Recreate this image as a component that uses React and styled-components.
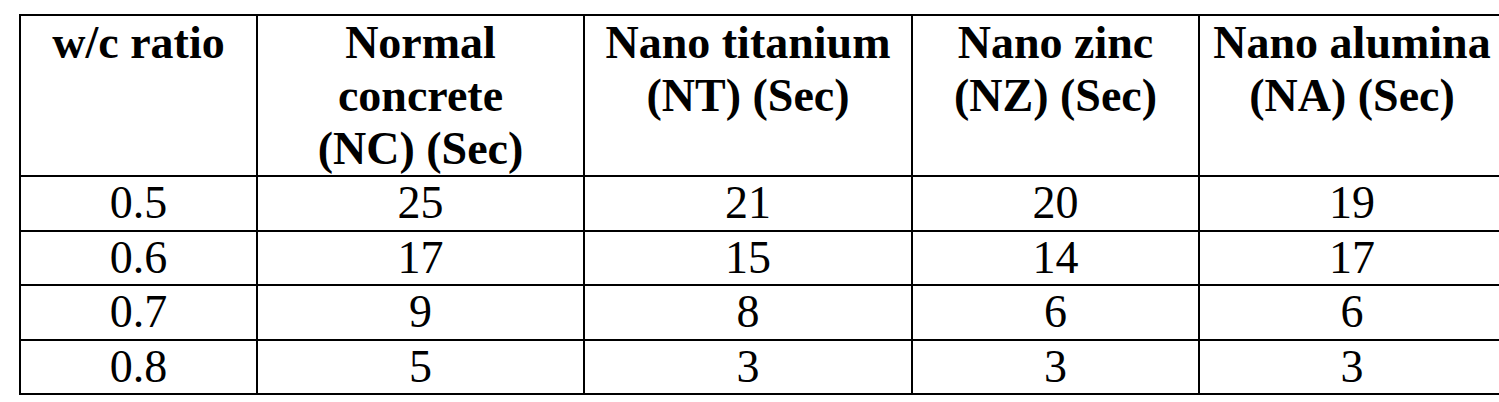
import React from "react";
import styled, { createGlobalStyle } from "styled-components";

const GlobalStyle = createGlobalStyle`
  html, body {
    margin: 0;
    padding: 0;
    background: #ffffff;
    overflow: hidden;
  }
`;

const Page = styled.div`
  padding: 14px 0 0 19px;
  width: 1600px;
`;

const Table = styled.table`
  border-collapse: collapse;
  table-layout: fixed;
  width: 1485px;
  font-family: "Liberation Serif", "Times New Roman", serif;
  font-size: 46px;
  line-height: 53px;
  color: #000;
`;

const HeadCell = styled.th`
  border: 2px solid #000;
  padding: 0 2px;
  font-weight: 700;
  text-align: center;
  vertical-align: top;
  height: 159px;
  box-sizing: border-box;
`;

const Cell = styled.td`
  border: 2px solid #000;
  padding: 0;
  text-align: center;
  vertical-align: top;
  font-weight: 400;
  line-height: 52.5px;
`;

const columns = [
  { width: 237, label: ["w/c ratio"] },
  { width: 327, label: ["Normal", "concrete", "(NC) (Sec)"] },
  { width: 328, label: ["Nano titanium", "(NT) (Sec)"] },
  { width: 287, label: ["Nano zinc", "(NZ) (Sec)"] },
  { width: 306, label: ["Nano alumina", "(NA) (Sec)"] },
];

const rows = [
  ["0.5", "25", "21", "20", "19"],
  ["0.6", "17", "15", "14", "17"],
  ["0.7", "9", "8", "6", "6"],
  ["0.8", "5", "3", "3", "3"],
];

const App = () => {
  return (
    <Page>
      <GlobalStyle />
      <Table>
        <colgroup>
          {columns.map((c, i) => (
            <col key={i} style={{ width: c.width }} />
          ))}
        </colgroup>
        <thead>
          <tr>
            {columns.map((c, i) => (
              <HeadCell key={i}>
                {c.label.map((line, j) => (
                  <React.Fragment key={j}>
                    {j > 0 && <br />}
                    {line}
                  </React.Fragment>
                ))}
              </HeadCell>
            ))}
          </tr>
        </thead>
        <tbody>
          {rows.map((r, i) => (
            <tr key={i}>
              {r.map((v, j) => (
                <Cell key={j}>{v}</Cell>
              ))}
            </tr>
          ))}
        </tbody>
      </Table>
    </Page>
  );
};

export default App;
